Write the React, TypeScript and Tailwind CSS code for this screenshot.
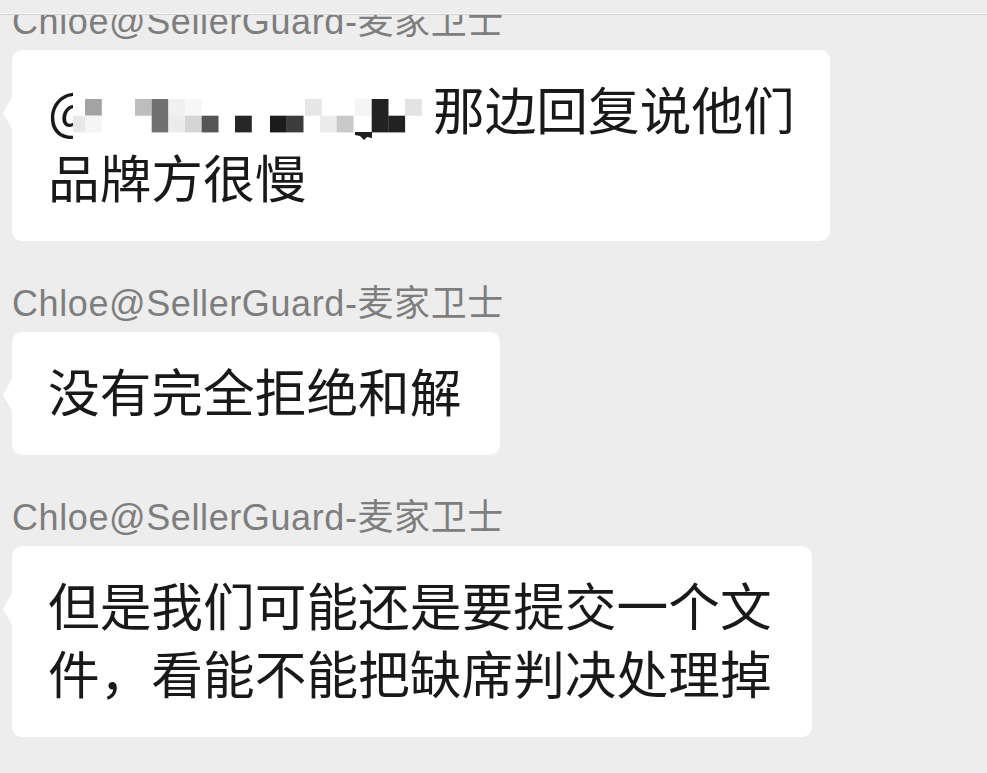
import React from "react";

const cjk = { fontFamily: '"Noto Sans CJK SC", "Noto Sans", sans-serif' };
const nameFont = { fontFamily: '"Liberation Sans", "Noto Sans CJK SC", sans-serif' };

function Name({ first }: { first?: boolean }) {
  return (
    <div
      className={`h-[44px] leading-[48px] text-[36px] tracking-[0.6px] text-[#7e7e7e] whitespace-nowrap mb-[8px] ${first ? "mt-[-17px]" : "mt-[39px]"}`}
      style={nameFont}
    >
      Chloe@SellerGuard-麦家卫士
    </div>
  );
}

function Bubble({ width, children }: { width: string; children: React.ReactNode }) {
  return (
    <div className={`relative ${width} bg-white rounded-[10px] pl-[36px] pt-[24px] pb-[31px] text-[51.7px] leading-[68px] text-[#191919] whitespace-nowrap`} style={cjk}>
      <div className="absolute left-[-9px] top-[47px] w-0 h-0 border-y-[16px] border-y-transparent border-r-[9px] border-r-white" />
      {children}
    </div>
  );
}

function Mosaic() {
  const A = 25;
  const B = 41.7;
  const h = 16.7;
  const cells: [number, number, number, string][] = [
    [12, A, h, "#a3a3a3"],
    [62, A, h, "#bdbdbd"],
    [78.7, A, h * 2, "#707070"],
    [95.3, A, h, "#f0f0f0"],
    [95.3, B, h, "#ececec"],
    [112, A, h, "#f7f7f7"],
    [232, A, h, "#e6e6e6"],
    [282, A, h, "#f5f5f5"],
    [298.7, A, h * 2, "#222222"],
    [332, A, h, "#e3e3e3"],
    [0, B, h, "#e8e8e8"],
    [12, B, h, "#f5f5f5"],
    [112, B, h, "#d4d4d4"],
    [128.7, B, h, "#555555"],
    [162, B, h, "#262626"],
    [197, B, h, "#1c1c1c"],
    [213.7, B, h, "#3c3c3c"],
    [247, B, h, "#ececec"],
    [263.7, B, h, "#c9c9c9"],
    [315.3, B, h, "#222222"],
  ];
  return (
    <svg width="360" height="68" viewBox="0 0 360 68" className="shrink-0">
      {cells.map(([x, y, hh, c], i) => (
        <rect key={i} x={x} y={y} width={16.8} height={hh} fill={c} />
      ))}
      <polygon points="282,58 299,58 299,64 294,63 291,66 287,62 282,61" fill="#1e1e1e" />
    </svg>
  );
}

export default function App() {
  return (
    <div className="w-[987px] h-[773px] bg-[#ededed] overflow-hidden flex flex-col">
      <div className="h-[15px] shrink-0 border-b border-[#d4d4d4] bg-[#ededed] relative z-10">
        <div className="absolute left-0 right-0 bottom-0 h-px bg-[#f6f6f6]" />
      </div>
      <div className="flex-1 overflow-hidden pl-[12px]">
        <Name first />
        <Bubble width="w-[818px]">
          <div className="flex h-[68px]">
            <span className="w-[25px] overflow-hidden shrink-0">@</span>
            <Mosaic />
            <span>那边回复说他们</span>
          </div>
          <div>品牌方很慢</div>
        </Bubble>
        <Name />
        <Bubble width="w-[488px]">
          <div>没有完全拒绝和解</div>
        </Bubble>
        <Name />
        <Bubble width="w-[800px]">
          <div>但是我们可能还是要提交一个文</div>
          <div>件，看能不能把缺席判决处理掉</div>
        </Bubble>
      </div>
    </div>
  );
}
